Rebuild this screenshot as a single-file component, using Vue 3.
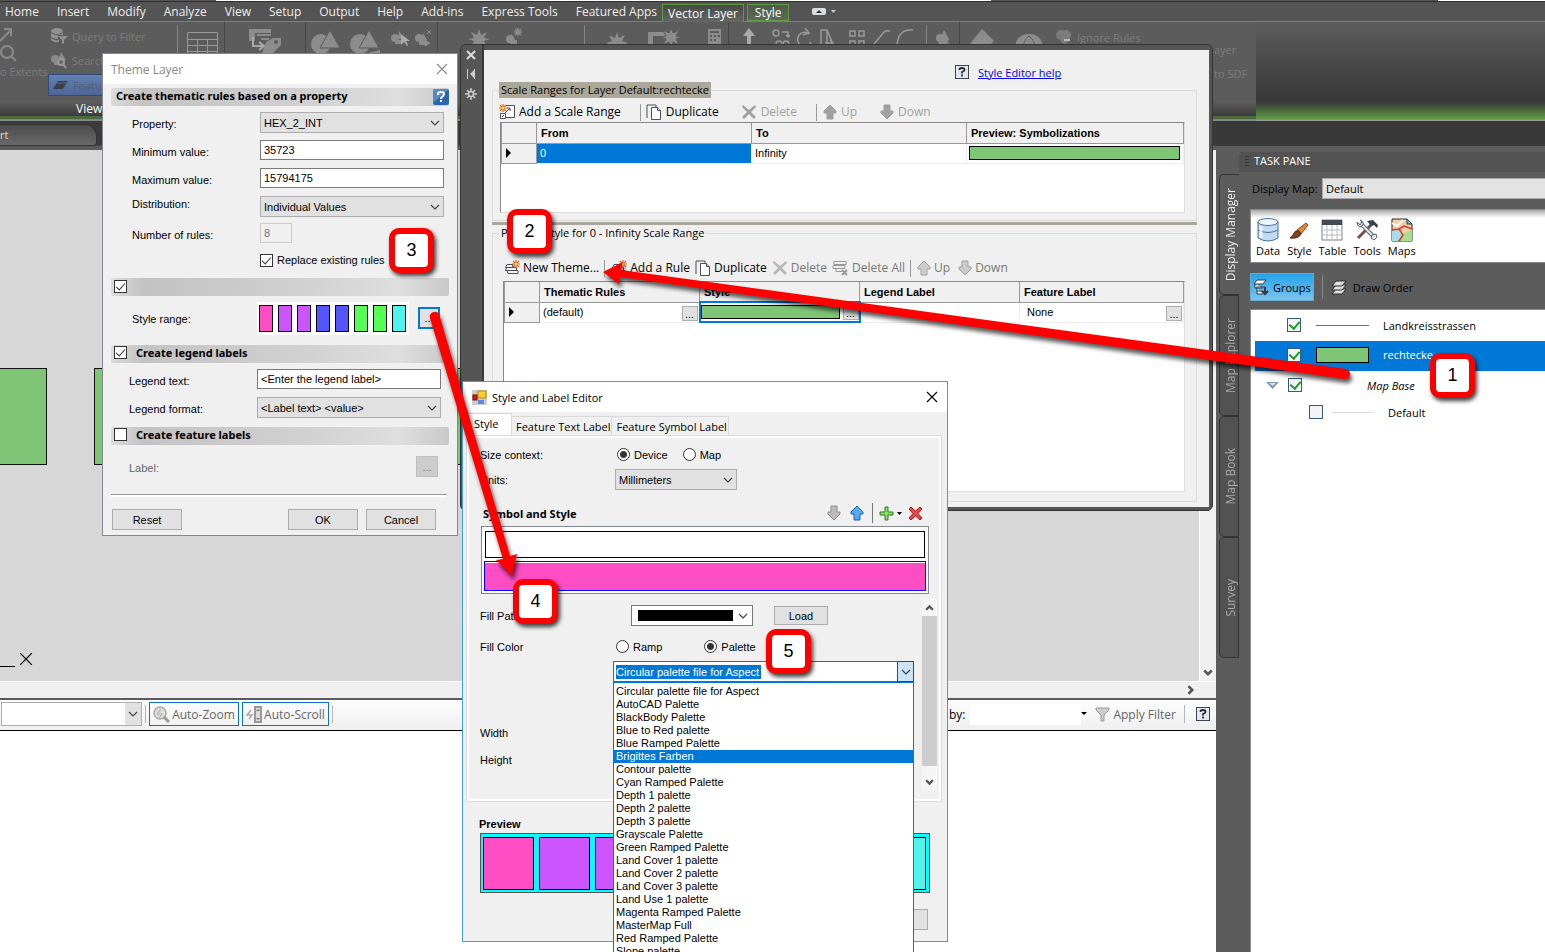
<script setup>
import { ref } from 'vue'

const menuTabs = ['Home', 'Insert', 'Modify', 'Analyze', 'View', 'Setup', 'Output', 'Help', 'Add-ins', 'Express Tools', 'Featured Apps']
const styleColors = ['#ff4dc3', '#cc55ff', '#cc55ff', '#5555ff', '#5555ff', '#55ff55', '#55ff55', '#4ff5ec']
const palettes = [
  'Circular palette file for Aspect', 'AutoCAD Palette', 'BlackBody Palette', 'Blue to Red palette',
  'Blue Ramped Palette', 'Brigittes Farben', 'Contour palette', 'Cyan Ramped Palette', 'Depth 1 palette',
  'Depth 2 palette', 'Depth 3 palette', 'Grayscale Palette', 'Green Ramped Palette', 'Land Cover 1 palette',
  'Land Cover 2 palette', 'Land Cover 3 palette', 'Land Use 1 palette', 'Magenta Ramped Palette',
  'MasterMap Full', 'Red Ramped Palette', 'Slope palette'
]
const sideTabs = ['Display Manager', 'Map Explorer', 'Map Book', 'Survey']
const minValue = ref('35723')
const maxValue = ref('15794175')
const ruleCount = ref('8')
const legendText = ref('<Enter the legend label>')
const palette = ref(palettes[0])
const hovered = ref('Brigittes Farben')
const context = ref('device')
const fill = ref('palette')
</script>

<template>
  <div class="desktop">
    <svg class="defs" width="0" height="0" aria-hidden="true">
      <symbol id="chev" viewBox="0 0 10 6"><path d="M1 1l4 4 4-4" fill="none" stroke="#444" stroke-width="1.2" /></symbol>
      <symbol id="chevBold" viewBox="0 0 8 6"><path d="M1 1l3 3 3-3" fill="none" stroke="#555" stroke-width="2" /></symbol>
      <symbol id="cross" viewBox="0 0 12 12"><path d="M1 1l10 10M11 1L1 11" fill="none" stroke="currentColor" stroke-width="1.1" /></symbol>
      <symbol id="up" viewBox="0 0 14 16"><path d="M7 1l6 6v2h-3v6H4V9H1V7z" stroke-width="1" /></symbol>
      <symbol id="pages" viewBox="0 0 16 16">
        <path d="M1 14V1h9M10 1v2" fill="none" stroke="#4a4f58" />
        <path d="M5.500 3.500h6l3 3v9h-9z" fill="#fff" stroke="#4a4f58" /><path d="M11.500 3.500v3h3" fill="#dde" stroke="#4a4f58" />
      </symbol>
      <symbol id="x" viewBox="0 0 16 16"><path d="M2 1l6 5 6-5 1 2-5 5 5 5-2 2-5-5-5 5-2-2 5-5-5-5z" fill="#a0a0a0" /></symbol>
      <symbol id="spark" viewBox="0 0 8 8"><path d="M4 0v8M0 4h8M1 1l6 6M7 1L1 7" stroke="#e0641a" stroke-width="1.200" /><circle cx="4" cy="4" r="1.500" fill="#ffe16a" /></symbol>
      <symbol id="theme" viewBox="0 0 16 16">
        <path d="M3 4.500h6l-1 3H1.500zM2.500 7.500h10v3h-11zM3 10.500h11v3H4z" fill="#f4f4f4" stroke="#4a4f58" />
        <use href="#spark" x="8" y="0" width="8" height="8" />
      </symbol>
      <symbol id="marker" viewBox="0 0 6 10"><path d="M0 0l5 5-5 5z" /></symbol>
      <symbol id="help" viewBox="0 0 14 14">
        <rect x=".5" y=".5" width="13" height="13" fill="#e4e8ee" stroke="#3b4350" />
        <path d="M4.500 5V4.500Q4.500 3 7 3t2.500 1.800Q9.500 6 7 7v1.500M7 9.500v2" fill="none" stroke="#222b38" stroke-width="1.800" />
      </symbol>
    </svg>

    <header class="menubar">
      <button v-for="t in menuTabs" :key="t" class="menu">{{ t }}</button>
      <button class="menu ctx active">Vector Layer</button>
      <button class="menu ctx">Style</button>
      <button class="collapse" aria-label="Minimize ribbon">
        <svg width="24" height="9"><rect x="0" y="1" width="14" height="7" rx="2" fill="#d8dde2" /><path d="M4 6l3-3 3 3z" fill="#333" /><path d="M19 3h5l-2.500 3z" fill="#ccc" /></svg>
      </button>
    </header>

    <section class="ribbon">
      <div class="extents">
        <svg width="18" height="42" fill="none" stroke="#8b8b8b" stroke-width="2"><path d="M0 19L11 8M4 7h7v7" /><circle cx="7" cy="30" r="6" /><path d="M11 34l5 5" /></svg>
        <span>o Extents</span>
      </div>
      <div class="views">
        <button class="rb"><svg width="17" height="17" fill="#929292"><ellipse cx="6" cy="3" rx="6" ry="3" /><path d="M0 5q6 4 12 0v2H7v4q-4 0-7-2zM0 10q4 3 8 2v2q-5 1-8-2zM7 8h10l-4 4v4l-2-1v-3z" /></svg>Query to Filter</button>
        <button class="rb"><svg width="17" height="17" fill="#8a8a8a"><circle cx="4" cy="7" r="4" /><path d="M10 0l5 8H7zM3 9h5v4H3z" /><circle cx="10" cy="10" r="3" fill="#666" stroke="#999" stroke-width="2" /><path d="M12 12l3 4" stroke="#999" stroke-width="2" /></svg>Search</button>
        <button class="rb feature"><svg width="17" height="12"><path d="M6 2h10l-5 8H1z" fill="#3a3f48" /><path d="M5 4h10" stroke="#65738a" /></svg>Feature</button>
        <span class="panelname">View</span>
      </div>
      <svg class="tools" width="884" height="34" aria-hidden="true">
        <g stroke="#464646"><path d="M47.500 0v34M128.500 0v34M260.500 0v34M551.500 0v34M782.500 0v34" /></g>
        <g stroke="#858585"><path d="M.5 3v31M407.500 3v31M749.500 3v31" /></g>
        <g fill="none" stroke="#999"><path d="M10.500 11v23M40.500 11v23M10.500 10.500h30M10.500 17.500h30M10.500 23.500h30M10.500 29.500h30M20.500 17v17M30.500 17v17" /></g>
        <g fill="#8c8c8c">
          <path d="M72 7h22v4H78v8h-6z" /><path d="M80 12h14v2H80zM84 16h8v2h-8z" /><path d="M76 15v9h9M82 20l5 4-5 4" fill="none" stroke="#aaa" stroke-width="2" />
          <path d="M89 20l7-4h8v7l-11 11H84z" /><circle cx="99" cy="20" r="2" fill="#5c5c5c" />
          <circle cx="144" cy="22" r="10" /><path d="M153 8l10 18h-20z" stroke="#5c5c5c" /><path d="M142 31h14l7 3h-22z" />
          <circle cx="183" cy="22" r="10" /><path d="M192 8l10 18h-20z" stroke="#5c5c5c" /><path d="M177 31h14l12-3v6h-24z" />
          <circle cx="218" cy="16" r="4" /><path d="M222 9l5 8h-6zM218 18h6v4h-6z" /><path d="M224 12v11l3-3 3 4 1-1-2-4h4z" fill="#aaa" />
          <circle cx="242" cy="16" r="4" /><path d="M246 11l4 7h-6zM242 18h6v5h-6z" /><path d="M250 8l4 4m0-4l-4 4M248 18l5 3-5 3z" stroke="#8c8c8c" />
          <path d="M302 7l2 6 6-3-3 6 6 1-6 2 3 6-6-3-2 7-2-7-6 3 3-6-6-2 6-1-3-6 6 3z" />
          <circle cx="333" cy="17" r="4" /><path d="M341 6v8M337 10h8M338 7l6 6M344 7l-6 6" stroke="#8c8c8c" stroke-width="1.500" /><path d="M333 18h7v4h-7zM334 12l5 7h-6z" />
          <path d="M440 10l2 6 6-3-3 6 6 2-6 2 3 5h-16l3-5-6-2 6-2-3-6 6 3z" />
          <path d="M471 10h19v4h-14v8h20v4h-25z" /><path d="M494 6l2 5 6-3-3 6 6 1-6 2 3 6-6-3-2 5-2-5-6 3 3-6-5-2 5-1-3-6 6 3z" stroke="#5c5c5c" />
          <path d="M531 7h13v15h-13z" /><path d="M533 9h9v2h-9zM533 13h2v2h-2zM537 13h2v2h-2zM541 13h2v2h-2zM533 17h2v2h-2zM537 17h2v2h-2z" fill="#5c5c5c" /><path d="M529 22h15v6h-15z" />
          <path d="M572 6l6 8h-4v14h-4V14h-4zM558 28l6-5v5zM580 23l6 5h-6z" fill="#aaa" />
        </g>
        <g fill="none" stroke="#999" stroke-width="1.500">
          <circle cx="599" cy="11" r="3" /><path d="M605 10h6v5M609 13l2 2 2-2" /><circle cx="602" cy="22" r="3" /><circle cx="609" cy="22" r="3" />
          <path d="M632 12a7 7 0 1 0 2 8M628 6l4 5-6 2" />
          <path d="M644 8h6v19h-6zM650 8l8 19h-8M648 21h8M653 18l3 3-3 3" />
          <path d="M673 9h5v5h-5zM682 9h5v5h-5zM673 19h5v5h-5zM682 19h5v5h-5zM697 22l11-13h5M720 26q0-17 12-18h4" />
        </g>
        <g fill="#8c8c8c"><circle cx="763" cy="16" r="4" /><path d="M767 9l5 9h-8zM762 18h8v5h-8zM770 19l4 6" stroke="#8c8c8c" />
          <path d="M805 7l12 12-9 10h-12l-4-6zM813 26l6-5M817 28l6-4" stroke="#777" />
          <path d="M838 28q0-16 14-16t14 16z" /><path d="M846 28q0-10 6-14 6 4 6 14" fill="none" stroke="#5c5c5c" />
        </g>
      </svg>
      <div class="rules">
        <span class="rb"><svg width="17" height="17" fill="#7c7c7c"><circle cx="5" cy="6" r="5" /><circle cx="10" cy="6" r="5" /><path d="M4 9q0 5 5 6 4-1 5-6z" /><path d="M8 11h6" stroke="#bbb" stroke-width="2" /></svg>Ignore Rules</span>
      </div>
      <div class="sdf"><span>ayer</span><span>to SDF</span></div>
      <div class="glow"></div>
    </section>

    <main class="work">
      <div class="mapcol">
        <nav class="doctabs"><a href="#" class="doctab">rt</a></nav>
        <div class="mapview">
          <div class="canvas">
            <div class="rects"><i class="rect first"></i><i class="rect second"></i></div>
            <div class="cursor"><i></i><svg width="14" height="14"><use href="#cross" /></svg></div>
          </div>
          <div class="vscroll"><svg width="10" height="8"><use href="#chevBold" /></svg></div>
        </div>
        <div class="hscroll"><svg width="10" height="8"><use href="#chevBold" /></svg></div>
        <div class="tablebar">
          <span class="combo wide"><select aria-label="Data table"><option></option></select><svg width="10" height="6"><use href="#chev" /></svg></span>
          <i class="vsep"></i>
          <button class="auto"><svg width="17" height="17"><circle cx="7" cy="7" r="6" fill="#ddd" stroke="#aaa" stroke-width="1.500" /><path d="M8 3L4 8h5l-3 4" stroke="#aaa" fill="none" /><path d="M11 11l5 5" stroke="#999" stroke-width="3" /></svg>Auto-Zoom</button>
          <button class="auto"><svg width="16" height="17"><path d="M5 4L1 9h5l-3 4" stroke="#aaa" fill="none" stroke-width="1.500" /><rect x="9" y="1" width="6" height="15" fill="#ddd" stroke="#999" stroke-width="2" /><path d="M10 5l2-2 2 2zM10 12l2 2 2-2z" fill="#777" /></svg>Auto-Scroll</button>
          <i class="vsep"></i>
          <div class="search">
            <label for="by">by:</label>
            <input id="by" type="text" /><svg width="6" height="4"><path d="M0 0h6L3 3z" /></svg>
            <button class="apply"><svg width="15" height="15"><path d="M1 1h13v2L9 8v6H6V8L1 3z" fill="#ccc" stroke="#999" /></svg>Apply Filter</button>
            <i class="vsep"></i>
            <svg width="14" height="14"><use href="#help" /></svg>
          </div>
        </div>
        <div class="blank"></div>
      </div>

      <aside class="taskpane">
        <div class="sidetabs"><button v-for="(t, i) in sideTabs" :key="t" :class="{ on: i === 0 }"><span>{{ t }}</span></button></div>
        <div class="pane">
          <h2><i></i>TASK PANE</h2>
          <div class="dmap"><label for="dm">Display Map:</label><select id="dm"><option>Default</option></select></div>
          <div class="panetools">
            <button><svg width="22" height="24"><path d="M1 4v16q10 6 20 0V4" fill="#c3daf3" stroke="#48709e" /><ellipse cx="11" cy="4" rx="10" ry="3.500" fill="#eef6ff" stroke="#48709e" /><path d="M1 12q10 5 20 0" fill="none" stroke="#48709e" /><path d="M4 8v12" stroke="#fff" stroke-width="3" opacity=".7" /></svg>Data</button>
            <button><svg width="22" height="24"><path d="M9 12L18 5l2 2-7 9z" fill="#e58a3a" stroke="#7c4420" /><path d="M2 20q3-2 4-5t5-2l2 3q-2 5-11 4z" fill="#7a4424" stroke="#52290f" /></svg>Style</button>
            <button><svg width="22" height="24"><rect x="1" y="2" width="20" height="20" fill="#fff" stroke="#7b8087" /><path d="M1 2h20v5H1z" fill="#434a55" /><path d="M1 12h20M1 17h20M6 7v15M11 7v15M16 7v15" stroke="#b7bbc0" /></svg>Table</button>
            <button><svg width="24" height="24"><path d="M3 20L17 6" stroke="#7c4b4b" stroke-width="3" /><path d="M5 5l14 14" stroke="#5d6670" stroke-width="4" /><path d="M5 5l14 14" stroke="#e5e9ed" stroke-width="2" /><path d="M12 3l6-1 5 5-1 3-3-3-3 1z" fill="#39414b" /><path d="M2 4l3 3 2-3-2-2q4 1 3 5l-3 2q-3-1-3-5zM17 17l4-1 1 3-3 3-3-2z" fill="#e5e9ed" stroke="#5d6670" /></svg>Tools</button>
            <button><svg width="22" height="24"><path d="M1 1h15l5 5v17H1z" fill="#f1d0a5" stroke="#222" /><path d="M1 13l7-2 3 6-4 6H1z" fill="#a7dcea" /><path d="M11 17l10-6v12H9z" fill="#a9dd8e" /><path d="M1 12l7-1 5-3 8 3M8 11l4 6-4 6" fill="none" stroke="#d8392f" stroke-width="1.500" /><path d="M1 5l5 3 6-6" fill="none" stroke="#fff" stroke-width="2" /><path d="M16 1v5h5z" fill="#7db2e6" stroke="#245" /></svg>Maps</button>
          </div>
          <div class="modes">
            <button class="groups"><svg width="17" height="17" fill="#fff" stroke="#333b45"><path d="M4 1h9l-3 4H1zM3 8h9M2 5v4h8M4 9v6h6M4 12h5" /><path d="M12 8v6M9 12l3 3 3-3" fill="none" stroke-width="2" /></svg>Groups</button>
            <i></i>
            <button><svg width="17" height="17" fill="#ddd" stroke="#2c2c2c"><path d="M5 10h10l-4 5H1z" /><path d="M5 6h10l-4 5H1z" /><path d="M5 2h10l-4 5H1z" /></svg>Draw Order</button>
          </div>
          <div class="tree">
            <label class="leaf"><input type="checkbox" checked /><i class="ln"></i><span>Landkreisstrassen</span></label>
            <label class="leaf sel"><input type="checkbox" checked /><i class="sw"></i><span>rechtecke</span></label>
            <label class="leaf base"><svg width="13" height="7"><path d="M0 0h13L6.500 7z" fill="#7f95ad" /><path d="M3 1h7l-3.500 3z" fill="#d5e2ef" /></svg><input type="checkbox" checked /><em>Map Base</em></label>
            <label class="leaf child"><input type="checkbox" /><i class="ln pale"></i><span>Default</span></label>
          </div>
        </div>
      </aside>
    </main>

    <section class="styleeditor">
      <div class="grip">
        <svg width="10" height="10"><path d="M1 1l8 8M9 1L1 9" stroke="#ddd" stroke-width="2" /></svg>
        <svg width="10" height="10" fill="#ccc"><path d="M1 0h1v10H1zM8 1v8L4 5zM8 0h1v10H8z" /></svg>
        <svg width="12" height="12" stroke="#ccc" fill="none" stroke-width="1.500"><circle cx="6" cy="6" r="2.500" /><path d="M6 0v3M6 9v3M0 6h3M9 6h3M2 2l2 2M8 8l2 2M10 2L8 4M4 8l-2 2" /></svg>
      </div>
      <div class="sebody">
        <div class="sehelp"><svg width="14" height="14"><use href="#help" /></svg><a href="#">Style Editor help</a></div>
        <fieldset class="g1">
          <legend>Scale Ranges for Layer Default:rechtecke</legend>
          <div class="bar b1">
            <button><svg width="16" height="16"><path d="M7 1.500h8.500v12H7" fill="#fff" stroke="#4a4f58" /><path d="M6 9l5-5M8 4h3v3" fill="none" stroke="#4a4f58" /><path d="M1.500 9.500h5v5h-5zM3 13l2-2" fill="#fff" stroke="#4a4f58" /><use href="#spark" width="8" height="8" /></svg>Add a Scale Range</button>
            <i></i>
            <button><svg width="16" height="16"><use href="#pages" /></svg>Duplicate</button>
            <button class="off del"><svg width="16" height="16"><use href="#x" /></svg>Delete</button>
            <i></i>
            <button class="off"><svg width="14" height="16" fill="#a0a0a0" stroke="#a0a0a0"><use href="#up" /></svg>Up</button>
            <button class="off dn"><svg class="flip" width="14" height="16" fill="#a0a0a0" stroke="#a0a0a0"><use href="#up" /></svg>Down</button>
          </div>
          <div class="gridbox">
            <table>
              <colgroup><col class="c0" /><col class="c1" /><col class="c1" /><col /></colgroup>
              <thead><tr><th></th><th>From</th><th>To</th><th>Preview: Symbolizations</th></tr></thead>
              <tbody><tr><th><svg width="6" height="10"><use href="#marker" /></svg></th><td class="picked">0</td><td>Infinity</td><td><i class="green"></i></td></tr></tbody>
            </table>
          </div>
        </fieldset>
        <div class="splitter"></div>
        <fieldset class="g2">
          <legend>Polygon Style for 0 - Infinity Scale Range</legend>
          <div class="bar b2">
            <button><svg width="16" height="16"><use href="#theme" /></svg>New Theme...</button>
            <i></i>
            <button><svg width="16" height="16"><use href="#theme" /></svg>Add a Rule</button>
            <button><svg width="16" height="16"><use href="#pages" /></svg>Duplicate</button>
            <button class="off2"><svg width="16" height="16" opacity=".7"><use href="#x" /></svg>Delete</button>
            <button class="off2"><svg width="17" height="16" fill="#eee" stroke="#999"><path d="M2 1.500h12v3H2zM1 5.500h12v3H1zM4 8.500v3h6" /><path d="M10 10l5 5M15 10l-5 5" stroke-width="2" /></svg>Delete All</button>
            <i></i>
            <button class="off2"><svg width="14" height="16" fill="#ccc" stroke="#a0a0a0"><use href="#up" /></svg>Up</button>
            <button class="off2 dn"><svg class="flip" width="14" height="16" fill="#ccc" stroke="#a0a0a0"><use href="#up" /></svg>Down</button>
          </div>
          <div class="gridbox">
            <table>
              <colgroup><col class="c0" /><col class="c2" /><col class="c2" /><col class="c2" /><col /></colgroup>
              <thead><tr><th></th><th>Thematic Rules</th><th>Style</th><th>Legend Label</th><th>Feature Label</th></tr></thead>
              <tbody><tr>
                <th><svg width="6" height="10"><use href="#marker" /></svg></th>
                <td><div class="cell"><span>(default)</span><button>...</button></div></td>
                <td class="focus"><div class="cell"><i class="green"></i><button>...</button></div></td>
                <td></td>
                <td><div class="cell none"><span>None</span><button>...</button></div></td>
              </tr></tbody>
            </table>
          </div>
        </fieldset>
      </div>
    </section>

    <section class="theme">
      <header><span>Theme Layer</span><svg width="12" height="12"><use href="#cross" /></svg></header>
      <div class="thbody">
        <h3 class="sec"><span>Create thematic rules based on a property</span>
          <svg width="16" height="16"><rect width="16" height="16" rx="2" fill="#2d66a8" /><path d="M0 0h16L0 14z" fill="#6ea3d6" opacity=".6" /><path d="M5 6V5q0-2 3-2t3 2-3 4v1M8 11v2" fill="none" stroke="#fff" stroke-width="2" /></svg>
        </h3>
        <div class="row sel"><label for="prop">Property:</label><span class="combo"><select id="prop"><option>HEX_2_INT</option></select><svg width="10" height="6"><use href="#chev" /></svg></span></div>
        <div class="row"><label for="min">Minimum value:</label><input id="min" v-model="minValue" type="text" /></div>
        <div class="row"><label for="max">Maximum value:</label><input id="max" v-model="maxValue" type="text" /></div>
        <div class="row sel dist"><label for="dist">Distribution:</label><span class="combo"><select id="dist"><option>Individual Values</option></select><svg width="10" height="6"><use href="#chev" /></svg></span></div>
        <div class="row num"><label for="cnt">Number of rules:</label><input id="cnt" v-model="ruleCount" type="text" disabled /></div>
        <label class="replace"><input type="checkbox" class="tick" checked />Replace existing rules</label>
        <h3 class="sec s2"><input type="checkbox" class="tick" checked aria-label="Style range" /></h3>
        <div class="row range"><span class="lbl">Style range:</span><div class="strip"><i v-for="(c, i) in styleColors" :key="i" :style="{ background: c }"></i></div><button class="dots focus">...</button></div>
        <h3 class="sec s3"><label><input type="checkbox" class="tick" checked />Create legend labels</label></h3>
        <div class="row leg"><label for="lt">Legend text:</label><input id="lt" v-model="legendText" type="text" /></div>
        <div class="row leg sel"><label for="lf">Legend format:</label><span class="combo"><select id="lf"><option>&lt;Label text&gt; &lt;value&gt;</option></select><svg width="10" height="6"><use href="#chev" /></svg></span></div>
        <h3 class="sec s4"><label><input type="checkbox" class="tick" />Create feature labels</label></h3>
        <div class="row lab"><span class="lbl">Label:</span><button class="dots" disabled>...</button></div>
        <hr />
        <div class="actions"><button>Reset</button><button class="ok">OK</button><button>Cancel</button></div>
      </div>
    </section>

    <section class="editor">
      <header>
        <svg width="15" height="15"><rect width="15" height="15" fill="#ccc" /><rect x="6" y="1" width="8" height="7" fill="#fc3" stroke="#b80" /><rect x="1" y="5" width="4" height="5" fill="#c22" stroke="#800" /><rect x="6" y="10" width="6" height="4" fill="#58e" /></svg>
        <span>Style and Label Editor</span>
        <svg class="close" width="12" height="12"><use href="#cross" /></svg>
      </header>
      <nav class="tabs"><button class="on">Style</button><button>Feature Text Label</button><button>Feature Symbol Label</button></nav>
      <div class="page">
        <div class="line size"><span>Size context:</span><label><input v-model="context" type="radio" name="ctx" value="device" />Device</label><label><input v-model="context" type="radio" name="ctx" value="map" />Map</label></div>
        <div class="line units"><label for="units">Units:</label><span class="combo"><select id="units"><option>Millimeters</option></select><svg width="10" height="6"><use href="#chev" /></svg></span></div>
        <div class="line symhead">
          <h3>Symbol and Style</h3>
          <svg class="flip" width="14" height="16" fill="#bbb" stroke="#8c8c8c"><use href="#up" /></svg>
          <svg class="blue" width="14" height="16" fill="#58a9f2" stroke="#1c62b0"><use href="#up" /></svg>
          <i></i>
          <svg width="24" height="16"><path d="M6 2h3v5h5v3H9v5H6v-5H1V7h5z" fill="#8fdc6a" stroke="#2f7a1b" /><path d="M18 7h5l-2.500 3z" /></svg>
          <svg width="15" height="15"><path d="M3 1l4.500 4L12 1l2 2-4 4.500 4 4.500-2 2-4.500-4L3 14l-2-2 4-4.500L1 3z" fill="#e04a4a" stroke="#a01c1c" /></svg>
        </div>
        <div class="symbols"><i></i><i class="pink"></i></div>
        <div class="fillarea">
          <div class="fillform">
            <div class="line fp"><span class="lbl">Fill Pattern</span><div class="pattern" role="img" aria-label="Solid pattern"><i></i><svg width="10" height="6"><use href="#chev" /></svg></div><button class="load">Load</button></div>
            <div class="line fc"><span class="lbl">Fill Color</span><label><input v-model="fill" type="radio" name="fill" value="ramp" />Ramp</label><label><input v-model="fill" type="radio" name="fill" value="palette" />Palette</label></div>
            <div class="paletterow">
              <div class="palbox">
                <input v-model="palette" type="text" aria-label="Palette" /><button aria-label="Open palettes"><svg width="10" height="6"><use href="#chev" /></svg></button>
                <ul><li v-for="p in palettes" :key="p" :class="{ hot: p === hovered }" @mouseenter="hovered = p" @click="palette = p">{{ p }}</li></ul>
              </div>
            </div>
            <div class="line wd">Width</div>
            <div class="line hg">Height</div>
          </div>
          <div class="sbar"><svg class="flip" width="9" height="7"><use href="#chevBold" /></svg><i></i><svg width="9" height="7"><use href="#chevBold" /></svg></div>
        </div>
      </div>
      <h3 class="pvhead">Preview</h3>
      <div class="preview"><i v-for="(c, i) in styleColors" :key="i" :style="{ background: c }"></i></div>
      <div class="foot"><button aria-label="Close"></button></div>
    </section>

    <svg class="arrows" aria-hidden="true">
      <g fill="#f00">
        <path d="M603 272l20-10-2 8 725 99a5 5 0 0 1-2 10L620 277l-1 7z" />
        <path d="M512 576l-16-16 7-1-73-241a5 5 0 0 1 9-4l71 242 7-2z" />
      </g>
    </svg>
    <div class="badge n1">1</div>
    <div class="badge n2">2</div>
    <div class="badge n3">3</div>
    <div class="badge n4">4</div>
    <div class="badge n5">5</div>
  </div>
</template>

<style>
html, body, #app { height: 100%; margin: 0; }
body { overflow: hidden; }
</style>

<style scoped>
.desktop { position: relative; display: flex; flex-direction: column; height: 100%; overflow: hidden; background: #5c5c5c; font: 11px "Open Sans", "Noto Sans", sans-serif; color: #000; }
.desktop * { box-sizing: border-box; }
.defs { position: absolute; }
svg { flex: none; display: block; }
button, input, select { font: inherit; color: inherit; margin: 0; padding: 0; border: 0; background: none; border-radius: 0; appearance: none; outline: 0; white-space: nowrap; }
button { display: flex; align-items: center; justify-content: center; flex: none; }
h2, h3 { margin: 0; font-size: 11px; }
i { flex: none; display: block; }
.flip { transform: rotate(180deg); }

.menubar { flex: none; height: 22px; display: flex; align-items: stretch; padding: 2px 0 1px 5px; background: linear-gradient(#2f2f2f, #2f2f2f) 0 1px / 100% 1px no-repeat, linear-gradient(90deg, #555 216px, #fff 216px 991px, #555 991px 1438px, #fff 1438px) 0 0 / 100% 1px no-repeat, #545454; border-bottom: 1px solid #5f9a44; color: #eee; }
.menu { font-size: 12px; margin-right: 18px; }
.menu:nth-child(11) { margin-right: 5px; }
.ctx { border: 1px solid #5f9a44; height: 17px; margin: 2px 3px 0 0; padding: 0 5px; background: linear-gradient(#4f5a4a, #5c6a56); color: #fff; }
.ctx + .ctx { padding: 0 7px; }
.ctx.active { border-bottom: 0; background: linear-gradient(#454a42, #666); height: 18px; }
.collapse { margin-left: 20px; }

.ribbon { flex: none; height: 99px; display: flex; background: linear-gradient(#5c5c5c 80px, #3b3b3b 94px, #5f9a44 95px, #3b3b3b 96px, #5f9a44 97px, #888 98px); color: #7c7c7c; overflow: hidden; }
.extents { width: 48px; flex: none; }
.extents span { display: block; white-space: nowrap; line-height: 16px; }
.views { width: 129px; flex: none; display: flex; flex-direction: column; }
.rb { justify-content: flex-start; display: flex; align-items: center; gap: 4px; height: 24px; padding: 5px 0 0 3px; }
.rb.feature { border: 1px solid #2f4b7d; background: linear-gradient(#6280b0, #4c6798); height: 22px; margin-top: 4px; padding: 0 3px; color: #565f70; }
.panelname { color: #fff; margin: 5px 0 0 28px; line-height: 16px; font-size: 12px; }
.rules { width: 97px; margin-left: -8px; white-space: nowrap; flex: none; }
.rules .rb { padding-top: 7px; }
.sdf { width: 106px; flex: none; display: flex; flex-direction: column; align-items: flex-start; padding: 20px 0 0 64px; line-height: 16px; gap: 8px; white-space: nowrap; }
.glow { flex: 1; background: linear-gradient(#5c5c5c, #383838 80px, #5f9a44 97px, #999 98px); }

.work { flex: 1; min-height: 0; display: flex; }
.mapcol { flex: 1; min-width: 0; display: flex; flex-direction: column; }
.doctabs { flex: none; height: 29px; padding-top: 3px; background: linear-gradient(#3a3a3a 24px, #5a5a5a 25px); }
.doctab { display: block; width: 97px; height: 22px; border: 1px solid #333; border-left: 0; border-radius: 0 12px 4px 0; background: linear-gradient(#4d4d4d, #686868); color: #ddd; text-decoration: none; line-height: 20px; }
.mapview { flex: 1; display: flex; min-height: 0; }
.canvas { flex: 1; background: #d7d7d7; display: flex; flex-direction: column; justify-content: space-between; padding: 218px 0 14px; }
.rects { display: flex; gap: 47px; height: 97px; }
.rect { border: 1px solid #111; background: #7ec575; }
.rect.first { width: 47px; border-left: 0; }
.rect.second { width: 369px; }
.cursor { display: flex; align-items: flex-end; gap: 4px; }
.cursor i { width: 15px; height: 1px; background: #000; }
.cursor svg { margin-bottom: 1px; }
.vscroll { width: 17px; border-left: 1px solid #fff; background: #f0f0f0; display: flex; align-items: flex-end; justify-content: center; padding-bottom: 4px; }
.hscroll { flex: none; height: 19px; background: #f0f0f0; border-top: 1px solid #fff; border-bottom: 2px solid #5a5a5a; display: flex; align-items: center; justify-content: flex-end; padding-right: 20px; }
.hscroll svg { transform: rotate(-90deg); }
.tablebar { flex: none; height: 31px; display: flex; align-items: center; background: linear-gradient(#fefefe, #efefef); border-bottom: 1px solid #000; padding: 1px 6px 3px 1px; gap: 3px; color: #666; font-size: 12px; }
.combo.wide { width: 141px; height: 24px; }
.vsep { width: 1px; height: 18px; background: #b5b5b5; }
.auto { border: 1px solid #0a72cc; height: 24px; width: 90px; gap: 2px; }
.auto + .auto { width: 87px; }
.search { margin-left: auto; display: flex; align-items: center; }
.search label { color: #000; }
.search input { width: 111px; height: 21px; margin-left: 5px; background: #fff; }
.search > svg:nth-of-type(1) { margin-right: 8px; }
.search .apply { gap: 3px; margin-right: 8px; }
.search > svg:last-child { margin-left: 11px; }
.blank { flex: none; height: 221px; background: #fff; }

.taskpane { flex: none; width: 329px; display: flex; background: #5c5c5c; border-top: 25px solid #383838; }
.sidetabs { width: 23px; padding: 28px 0 0 3px; }
.sidetabs button { width: 20px; height: 121px; border: 1px solid #333; background: #525252; border-radius: 5px 0 0 5px; color: #aaa; font-size: 12px; padding-left: 2px; }
.sidetabs button.on { background: #5c5c5c; border-right: 0; color: #eee; }
.sidetabs span { writing-mode: vertical-rl; transform: rotate(180deg); }
.pane { flex: 1; min-width: 0; display: flex; flex-direction: column; padding-top: 6px; }
.pane h2 { height: 20px; background: #525252; color: #fff; font-weight: 400; font-size: 11px; display: flex; align-items: center; gap: 5px; padding: 0 0 3px 6px; line-height: 16px; border-radius: 4px 0 0 0; }
.pane h2 i { width: 4px; height: 10px; background: repeating-linear-gradient(#333 0 1px, transparent 1px 3px); }
.dmap { display: flex; align-items: center; height: 21px; margin: 6px 0 0 13px; }
.dmap label { width: 70px; }
.dmap select { flex: 1; height: 21px; background: #e3e3e3; border: 1px solid #aaa; border-right: 0; padding-left: 3px; }
.panetools { margin: 10px 0 0 11px; height: 54px; display: flex; gap: 7px; padding: 8px 5px 0; background: linear-gradient(#aaa, #fff 8px); border: 1px solid #888; border-right: 0; }
.panetools button { flex-direction: column; justify-content: flex-start; gap: 1px; line-height: 16px; }
.modes { display: flex; align-items: center; margin: 10px 0 0 11px; height: 28px; gap: 8px; }
.groups { height: 28px; padding: 0 2px; background: linear-gradient(#23a3e8, #7cc4ee); border: 1px solid #68a9cc; }
.modes button { gap: 5px; }
.modes .groups { gap: 3px; }
.modes i { width: 1px; height: 24px; background: #888; }
.tree { flex: 1; background: #fff; border: 1px solid #888; border-width: 1px 0 0 1px; margin: 8px 0 0 11px; padding: 1px 0 0 4px; }
.leaf { display: flex; align-items: center; height: 30px; padding: 0 0 2px 32px; }
.leaf input { width: 14px; height: 14px; border: 1px solid #35597f; background: #f2f4f5; flex: none; }
.leaf input:checked::after { content: ""; display: block; width: 5px; height: 8px; margin: 0 auto; border: solid #1e9a27; border-width: 0 2px 2px 0; transform: rotate(40deg); }
.leaf .ln { width: 53px; height: 1px; background: #1c9a58; margin: 0 14px 0 15px; }
.leaf .sw { width: 53px; height: 16px; border: 1px solid #000; background: #7ec575; margin: 0 14px 0 15px; }
.leaf.sel { background: #0078d7; color: #fff; padding-bottom: 3px; }
.leaf.base { padding-left: 11px; }
.leaf.base input { margin-left: 9px; }
.leaf.base em { margin-left: 65px; }
.leaf.child { padding-left: 54px; height: 24px; }
.leaf.child .ln { width: 42px; background: #ddd; margin: 0 14px 0 9px; }

.styleeditor { position: absolute; left: 460px; top: 44px; width: 753px; height: 467px; display: flex; background: #555; border: 1px solid #333; border-radius: 6px; padding: 0 3px 3px 0; }
.grip { width: 23px; display: flex; flex-direction: column; align-items: center; padding: 5px 2px 0 0; gap: 9px; border-right: 2px solid #3a3a3a; }
.sebody { flex: 1; background: #f0f0f0; margin-top: 5px; padding: 15px 12px 5px 8px; display: flex; flex-direction: column; }
.sehelp { display: flex; align-items: center; gap: 9px; height: 14px; padding-left: 463px; flex: none; }
.sehelp a { color: #00e; }
fieldset { margin: 0; min-width: 0; border: 1px solid #dcdcdc; padding: 0; }
.styleeditor legend { line-height: 16px; padding: 0 2px; margin-left: 6px; height: 16px; }
.g1 { margin-top: 3px; height: 139px; padding: 0 11px 8px 6px; }
.g1 legend { background: #aca899; margin-left: 0; }
.splitter { height: 3px; background: #aca899; margin: 1px 0 0; flex: none; }
.g2 { height: 277px; padding: 0 11px 11px 11px; }
.g2 legend { margin-left: -5px; }
.bar { display: flex; align-items: center; height: 20px; font-size: 12px; }
.bar button { gap: 4px; line-height: 16px; }
.bar i { width: 1px; height: 17px; background: #999; }
.b1 { margin-top: 4px; }
.b1 i:nth-of-type(1) { margin: 0 5px 0 19px; }
.b1 i:nth-of-type(2) { margin: 0 6px 0 19px; }
.b1 .del { margin-left: 22px; }
.b1 .dn { margin-left: 23px; }
.off { color: #a0a0a0; }
.off2 { color: #777; }
.b2 { margin-top: 17px; gap: 5px; }
.bar.b2 button { gap: 3px; }
.bar.b2 i { margin-right: 1px; }
.bar.b2 .dn { margin-left: 3px; }
.gridbox { border: 1px solid #888; border-right-color: #ddd; border-bottom-color: #ddd; background: #fff; height: 91px; margin-left: 1px; font: 11px "Liberation Sans", Arial, sans-serif; }
.g2 .gridbox { height: 211px; margin-left: -1px; margin-top: 3px; }
table { width: 100%; border-collapse: collapse; table-layout: fixed; }
.c0 { width: 35px; } .c1 { width: 215px; } .c2 { width: 160px; }
th, td { padding: 0 0 0 4px; height: 20px; text-align: left; border: 1px solid #eee; white-space: nowrap; border-top: 0; }
th { background: #f0f0f0; border-color: #999; }
tbody td { padding-left: 3px; }
.picked { background: #0078d7; color: #fff; }
td:has(.green) { padding: 0 3px 0 2px; }
.green { height: 14px; border: 1px solid #000; background: #7ec575; }
.cell { display: flex; align-items: flex-end; justify-content: space-between; height: 18px; padding-right: 1px; }
.cell.none { padding-left: 4px; }
.cell span { align-self: center; }
.cell .green { flex: 1; margin-right: 3px; align-self: center; }
.cell button { width: 16px; height: 15px; background: #e1e1e1; border: 1px solid #adadad; align-items: flex-end; line-height: 12px; }
td.focus { border: 2px solid #0078d7; padding: 0; }
td.focus .cell { height: 16px; padding: 0; }

.combo { position: relative; display: block; height: 21px; }
.combo select { width: 100%; height: 100%; display: block; border: 1px solid #adadad; background-color: #e1e1e1; padding-left: 3px; }
.combo svg { position: absolute; right: 4px; top: 8px; pointer-events: none; }
.combo.wide select { background: linear-gradient(#e1e1e1, #e1e1e1) right / 16px no-repeat, #fff; }
.combo.wide svg { top: 9px; }

.theme { position: absolute; left: 102px; top: 53px; width: 356px; height: 483px; border: 1px solid #828790; background: #f0f0f0; font-family: "Liberation Sans", Arial, sans-serif; }
.theme header { height: 30px; background: #fff; display: flex; align-items: center; justify-content: space-between; padding: 0 9px 0 8px; font: 12px "Open Sans", sans-serif; color: #888; }
.thbody { padding: 4px 8px 0; }
.sec { height: 18px; display: flex; align-items: center; justify-content: space-between; padding: 0 0 0 5px; font: bold 11px/14px "Noto Sans", sans-serif; background: linear-gradient(100deg, #ddd 0, #c3c3c3 10%, #d0d0d0 55%, #dedede 85%, #c8c8c8); border-radius: 2px; }
.sec > span { padding-bottom: 2px; }
.sec label { display: flex; align-items: center; height: 16px; padding-bottom: 1px; margin-bottom: 2px; }
.sec .tick { margin: 0 9px 0 -2px; }
.s2 .tick { margin-bottom: 2px; }
.tick { width: 13px; height: 13px; border: 1px solid #333; background: #fff; flex: none; }
.tick:checked::after { content: ""; display: block; width: 4px; height: 8px; margin: 0 auto; border: solid #333; border-width: 0 1px 1px 0; transform: rotate(42deg); }
.row { display: flex; height: 20px; margin: 8px 5px 0 21px; }
.row > label, .row > .lbl { width: 128px; padding-top: 4px; line-height: 16px; flex: none; }
.row input { flex: 1; min-width: 0; height: 20px; border: 1px solid #7a7a7a; background: #fff; padding-left: 3px; }
.row .combo { flex: 1; }
.row.sel { margin-top: 6px; height: 21px; }
.row.sel + .row { margin-top: 7px; }
.row.dist { margin-top: 8px; }
.row.dist > label { padding-top: 0; }
.row.num { margin-top: 6px !important; }
.row.num input { flex: none; width: 32px; background: #f0f0f0; border-color: #ccc; color: #777; }
.replace { display: flex; align-items: center; height: 16px; gap: 4px; margin: 9px 0 0 149px; }
.s2 { margin-top: 10px; }
.row.range { height: 32px; margin-top: 6px; align-items: center; }
.row.range .lbl { width: 125px; padding: 2px 0 0; }
.strip { display: flex; gap: 5px; background: #fff; width: 152px; padding: 3px 2px; }
.strip i { width: 14px; height: 27px; border: 1px solid #000; }
.dots { width: 22px; height: 21px; border: 1px solid #adadad; background: #e1e1e1; margin-left: 9px; }
.dots.focus { border: 2px solid #0078d7; height: 22px; }
.dots:disabled { background: #ccc; border-color: #bfbfbf; color: #777; }
.s3 { margin-top: 11px; }
.row.leg { margin: 6px 8px 0 18px; }
.row.leg.sel { margin-top: 8px; }
.s4 { margin-top: 9px; }
.row.lab { height: 21px; margin: 11px 11px 0 18px; justify-content: space-between; color: #666; }
hr { margin: 17px 2px 0 0; border: 0; border-top: 1px solid #999; border-bottom: 2px solid #fff; height: 3px; }
.actions { display: flex; gap: 8px; margin: 12px 13px 0 1px; }
.actions button, .load, .foot button { width: 70px; height: 21px; border: 1px solid #adadad; background: #e1e1e1; }
.actions .ok { margin-left: auto; }

.editor { position: absolute; left: 462px; top: 381px; width: 486px; height: 561px; border: 1px solid #3d9ee0; background: #f0f0f0; font-family: "Liberation Sans", Arial, sans-serif; }
.editor header { height: 30px; background: #fff; display: flex; align-items: center; gap: 5px; padding: 0 9px; font: 11px "Open Sans", sans-serif; }
.editor .close { margin-left: auto; }
.editor .tabs { display: flex; align-items: flex-end; height: 23px; padding-left: 4px; font: 11px "Open Sans", sans-serif; }
.editor .tabs button { height: 19px; border: 1px solid #d9d9d9; border-bottom: 0; border-left: 0; padding: 0 1px 0 4px; }
.editor .tabs .on { height: 22px; background: #fff; width: 45px; justify-content: flex-start; padding: 0 7px 3px; }
.page { margin: 0 5px 0 3px; height: 367px; border: 1px solid #dcdcdc; outline: 2px solid #fff; outline-offset: -3px; padding: 8px 3px 0 13px; }
.line { display: flex; align-items: center; height: 21px; }
.line label { display: flex; align-items: center; gap: 4px; }
.line input[type=radio] { width: 13px; height: 13px; border: 1px solid #333; border-radius: 50%; background: #fff; flex: none; }
.line input[type=radio]:checked { background: radial-gradient(#333 0 3px, #fff 4px); }
.size > span { width: 137px; } .size label { margin-right: 15px; }
.units { margin-top: 4px; }
.units > label { width: 135px; }
.units .combo { width: 122px; }
.symhead { margin-top: 12px; height: 22px; padding-right: 15px; }
.symhead h3 { font: bold 11px "Noto Sans", sans-serif; margin: 0 auto 0 3px; }
.symhead .blue { margin: 0 8px 0 9px; }
.symhead i { width: 1px; height: 20px; background: #777; margin-right: 6px; }
.symhead svg:last-child { margin-left: 5px; }
.symbols { width: 448px; height: 68px; margin: 2px 0 0 1px; border: 1px solid #828790; background: #fff; padding: 4px 3px 2px; }
.symbols i { height: 27px; border: 1px solid #000; }
.symbols .pink { height: 30px; margin: 3px -1px 0; border-color: #00f; background: #ff4dc3; box-shadow: inset 0 1px #fff; }
.fillarea { display: flex; margin-top: 5px; }
.fillform { flex: 1; }
.fp { margin-top: 6px; } .fp .lbl { width: 151px; }
.pattern { width: 122px; height: 21px; border: 1px solid #777; background: #fff; display: flex; align-items: center; justify-content: space-between; padding: 0 4px 0 6px; }
.pattern i { width: 95px; height: 11px; background: #000; }
.load { width: 54px; height: 19px; margin-left: 21px; }
.fc { margin-top: 10px; }
.fc .lbl { width: 136px; } .fc label { margin-right: 42px; }
.paletterow { padding-left: 133px; height: 61px; padding-top: 4px; }
.palbox { position: relative; width: 301px; height: 21px; border: 1px solid #0078d7; background: #fff; display: flex; align-items: center; justify-content: space-between; padding-left: 2px; }
.palbox input { width: 145px; height: 14px; background: #0078d7; color: #fff; }
.palbox button { width: 17px; height: 21px; background: #cce4f7; border: 1px solid #00569c; margin: -1px; }
.palbox ul { position: absolute; z-index: 2; left: -1px; top: 20px; width: 301px; margin: 0; padding: 2px 0 0; border: 1px solid #0078d7; background: #fff; list-style: none; }
.palbox li { height: 13px; line-height: 13px; padding-left: 2px; }
.palbox .hot { background: #0078d7; color: #fff; }
.wd { margin-top: 4px; } .hg { margin-top: 6px; }
.sbar { width: 15px; height: 192px; margin-right: 1px; display: flex; flex-direction: column; align-items: center; background: #f5f5f5; padding: 5px 0; justify-content: space-between; }
.sbar i { width: 15px; height: 150px; background: #cdcdcd; margin-bottom: 8px; }
.pvhead { margin: 13px 0 0 16px; height: 18px; line-height: 18px; }
.preview { width: 450px; height: 60px; margin: 0 0 0 17px; border: 1px solid #555; background: #0ff; padding: 3px 2px; display: flex; gap: 5px; }
.preview i { width: 51px; height: 53px; border: 1px solid #000; }
.foot { display: flex; justify-content: flex-end; margin: 16px 19px 0; }

.arrows { position: absolute; inset: 0; width: 100%; height: 100%; pointer-events: none; filter: drop-shadow(2px 4px 2px rgba(0, 0, 0, .65)); }
.badge { position: absolute; width: 45px; height: 45px; border: 6px solid #f00; border-radius: 10px; background: #fff; display: flex; align-items: center; justify-content: center; font: 18px "Liberation Sans", Arial, sans-serif; box-shadow: 2px 3px 4px rgba(0, 0, 0, .75); }
.n1 { left: 1430px; top: 353px; }
.n2 { left: 507px; top: 209px; }
.n3 { left: 389px; top: 228px; }
.n4 { left: 513px; top: 579px; }
.n5 { left: 766px; top: 629px; }
</style>
